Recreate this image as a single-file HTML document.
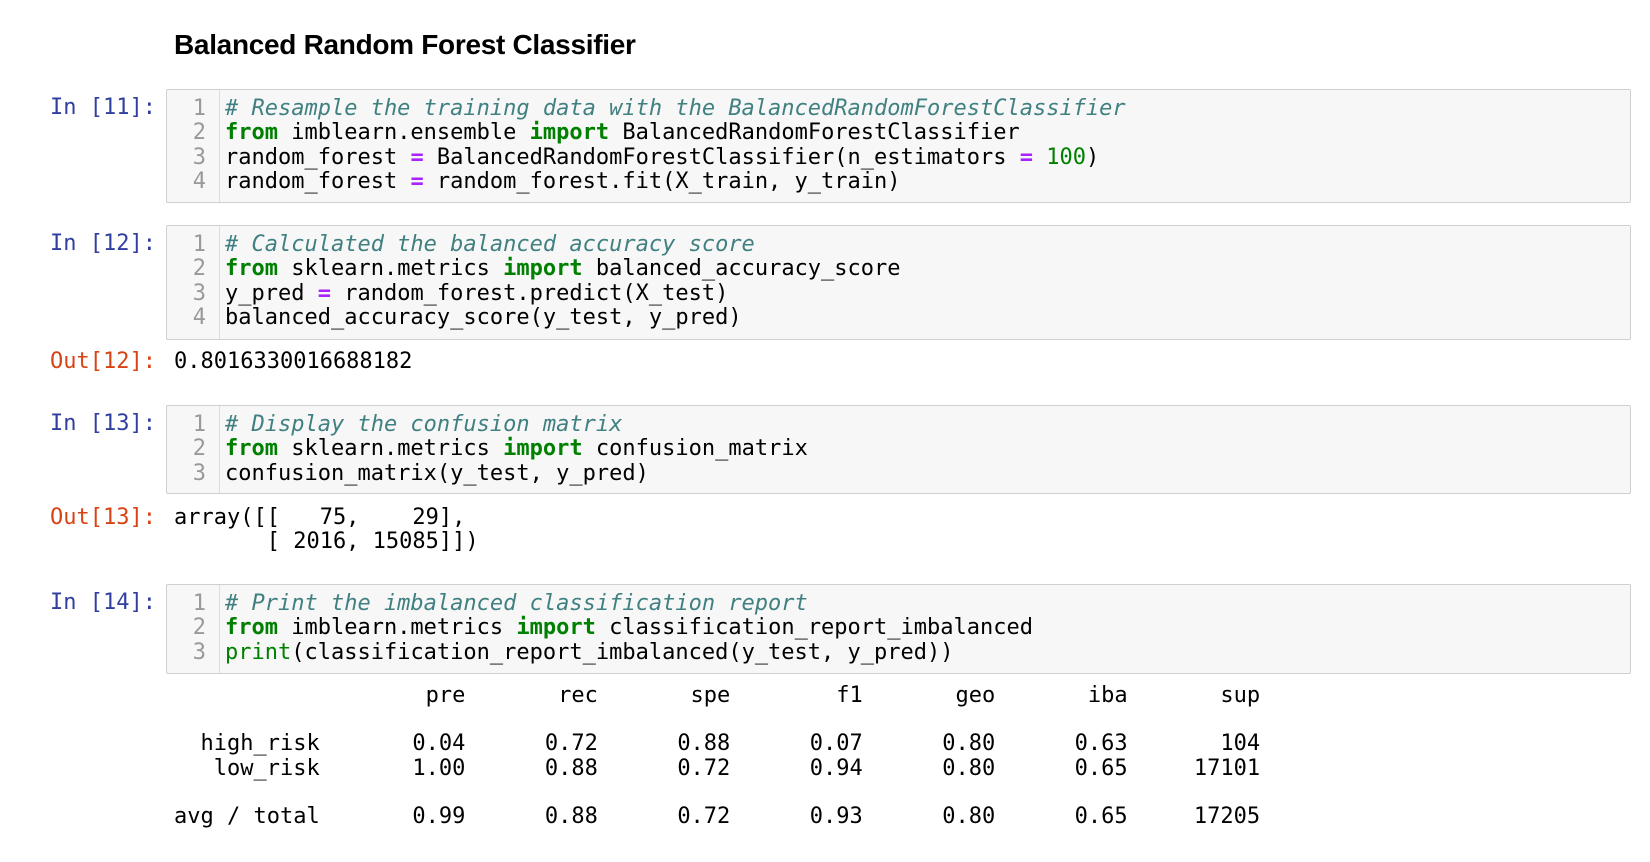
<!DOCTYPE html>
<html><head><meta charset="utf-8"><style>
body{margin:0;width:1650px;height:862px;background:#fff;position:relative;overflow:hidden;font-family:"DejaVu Sans Mono","Liberation Mono",monospace;font-size:22px;}
.t{position:absolute;left:174px;top:29px;font-family:"Liberation Sans",Arial,sans-serif;font-weight:bold;font-size:28px;line-height:32px;color:#000;letter-spacing:-0.3px}
.p{position:absolute;right:1494px;line-height:24.4px;white-space:pre}
.in{color:#303F9F}.out{color:#D84315}
.box{position:absolute;left:166px;width:1465px;background:#f7f7f7;border:1.5px solid #cfcfcf;border-radius:2px;box-sizing:border-box}
.g{position:absolute;left:0;top:0;bottom:0;width:52px;border-right:1px solid #ddd}
.ln{position:absolute;left:0;width:39px;text-align:right;color:#999;line-height:24.4px;white-space:pre}
.code{position:absolute;left:58px;line-height:24.4px;white-space:pre;color:#000}
.c{color:#408080;font-style:italic}.k{color:#008000;font-weight:bold}.o{color:#AA22FF;font-weight:bold}.n{color:#008000}.b{color:#008000}
pre{margin:0;position:absolute;left:174px;font:inherit;line-height:24.2px;color:#000}
</style></head><body>
<div class="t">Balanced Random Forest Classifier</div>

<div class="p in" style="top:96px">In [11]:</div>
<div class="box" style="top:89px;height:114px"><div class="g"></div>
<div class="ln" style="top:7px">1
2
3
4</div>
<div class="code" style="top:7px"><span class="c"># Resample the training data with the BalancedRandomForestClassifier</span>
<span class="k">from</span> imblearn.ensemble <span class="k">import</span> BalancedRandomForestClassifier
random_forest <span class="o">=</span> BalancedRandomForestClassifier(n_estimators <span class="o">=</span> <span class="n">100</span>)
random_forest <span class="o">=</span> random_forest.fit(X_train, y_train)</div></div>

<div class="p in" style="top:232px">In [12]:</div>
<div class="box" style="top:225px;height:115px"><div class="g"></div>
<div class="ln" style="top:7px">1
2
3
4</div>
<div class="code" style="top:7px"><span class="c"># Calculated the balanced accuracy score</span>
<span class="k">from</span> sklearn.metrics <span class="k">import</span> balanced_accuracy_score
y_pred <span class="o">=</span> random_forest.predict(X_test)
balanced_accuracy_score(y_test, y_pred)</div></div>

<div class="p out" style="top:350px">Out[12]:</div>
<pre style="top:350px">0.8016330016688182</pre>

<div class="p in" style="top:412px">In [13]:</div>
<div class="box" style="top:405px;height:89px"><div class="g"></div>
<div class="ln" style="top:7px">1
2
3</div>
<div class="code" style="top:7px"><span class="c"># Display the confusion matrix</span>
<span class="k">from</span> sklearn.metrics <span class="k">import</span> confusion_matrix
confusion_matrix(y_test, y_pred)</div></div>

<div class="p out" style="top:506px">Out[13]:</div>
<pre style="top:506px">array([[   75,    29],
       [ 2016, 15085]])</pre>

<div class="p in" style="top:591px">In [14]:</div>
<div class="box" style="top:584px;height:90px"><div class="g"></div>
<div class="ln" style="top:7px">1
2
3</div>
<div class="code" style="top:7px"><span class="c"># Print the imbalanced classification report</span>
<span class="k">from</span> imblearn.metrics <span class="k">import</span> classification_report_imbalanced
<span class="b">print</span>(classification_report_imbalanced(y_test, y_pred))</div></div>

<pre style="top:684px">                   pre       rec       spe        f1       geo       iba       sup

  high_risk       0.04      0.72      0.88      0.07      0.80      0.63       104
   low_risk       1.00      0.88      0.72      0.94      0.80      0.65     17101

avg / total       0.99      0.88      0.72      0.93      0.80      0.65     17205</pre>
</body></html>
